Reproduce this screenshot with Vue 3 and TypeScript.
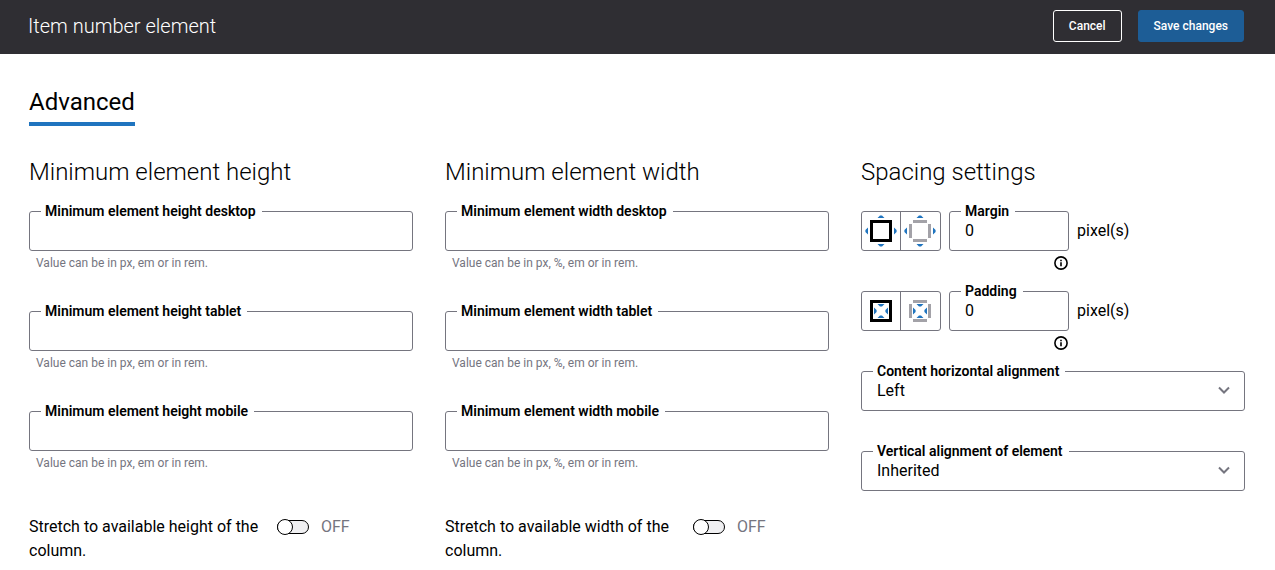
<script setup lang="ts">
import { reactive } from 'vue'

interface SizeColumn {
  key: 'height' | 'width'
  units: string
}

const columns: SizeColumn[] = [
  { key: 'height', units: 'px, em or in rem' },
  { key: 'width', units: 'px, %, em or in rem' },
]
const devices = ['desktop', 'tablet', 'mobile'] as const

const sizes = reactive<Record<string, string>>({})
const stretch = reactive<Record<string, boolean>>({ height: false, width: false })

const spacing = reactive([
  { key: 'margin', label: 'Margin', value: '0', all: true },
  { key: 'padding', label: 'Padding', value: '0', all: true },
])

const arrows: Record<string, string> = {
  margin: 'M12.5 3 15 .4h2L19.5 3zM12.5 29 15 31.6h2l2.5-2.6zM3 12.5.4 15v2L3 19.5zM29 12.5l2.6 2.5v2L29 19.5z',
  padding: 'M12.5 9h7L17 11.6h-2zM12.5 23h7L17 20.4h-2zM9 12.5v7l2.6-2.5v-2zM23 12.5v7L20.4 17v-2z',
}

const alignments = reactive([
  { key: 'horizontal', label: 'Content horizontal alignment', value: 'Left', options: ['Left', 'Center', 'Right'] },
  { key: 'vertical', label: 'Vertical alignment of element', value: 'Inherited', options: ['Inherited', 'Top', 'Center', 'Bottom'] },
])
</script>

<template>
  <div class="page">
    <header class="bar">
      <h1>Item number element</h1>
      <div class="actions">
        <button type="button" class="btn">Cancel</button>
        <button type="button" class="btn primary">Save changes</button>
      </div>
    </header>

    <main>
      <nav class="tabs"><button type="button" class="tab">Advanced</button></nav>

      <div class="columns">
        <section v-for="col in columns" :key="col.key">
          <h2>Minimum element {{ col.key }}</h2>
          <div v-for="device in devices" :key="device" class="size">
            <div class="field">
              <label :for="`${col.key}-${device}`">Minimum element {{ col.key }} {{ device }}</label>
              <input :id="`${col.key}-${device}`" v-model="sizes[`${col.key}-${device}`]" type="text" />
            </div>
            <p class="hint">Value can be in {{ col.units }}.</p>
          </div>
          <div class="stretch">
            <label :for="`stretch-${col.key}`">Stretch to available {{ col.key }} of the column.</label>
            <div class="switch">
              <input :id="`stretch-${col.key}`" v-model="stretch[col.key]" type="checkbox" role="switch" />
              <span>{{ stretch[col.key] ? 'ON' : 'OFF' }}</span>
            </div>
          </div>
        </section>

        <section>
          <h2>Spacing settings</h2>
          <div v-for="item in spacing" :key="item.key" class="spacing">
            <div class="modes">
              <button type="button" :aria-label="`${item.label} on all sides`" :aria-pressed="item.all" @click="item.all = true">
                <svg viewBox="0 0 32 32" aria-hidden="true">
                  <path d="M5 5h22v22H5zM8 8v16h16V8z" fill="#000" fill-rule="evenodd" />
                  <path :d="arrows[item.key]" fill="#1f74bf" />
                </svg>
              </button>
              <button type="button" :aria-label="`${item.label} per side`" :aria-pressed="!item.all" @click="item.all = false">
                <svg viewBox="0 0 32 32" aria-hidden="true">
                  <path d="M9 5h14v3H9zM9 24h14v3H9zM5 9h3v14H5zM24 9h3v14h-3z" fill="#a3a2a8" />
                  <path :d="arrows[item.key]" fill="#1f74bf" />
                </svg>
              </button>
            </div>
            <div class="amount">
              <div class="field">
                <label :for="item.key">{{ item.label }}</label>
                <input :id="item.key" v-model="item.value" type="text" />
              </div>
              <button type="button" class="info" :aria-label="`About ${item.label}`">
                <svg viewBox="0 0 16 16" aria-hidden="true">
                  <circle cx="8" cy="8" r="6.1" fill="none" stroke="#000" stroke-width="1.6" />
                  <path d="M7.2 7.2h1.6v4H7.2zM7.2 4.7h1.6v1.6H7.2z" fill="#000" />
                </svg>
              </button>
            </div>
            <span class="unit">pixel(s)</span>
          </div>

          <div v-for="item in alignments" :key="item.key" class="field align">
            <label :for="item.key">{{ item.label }}</label>
            <select :id="item.key" v-model="item.value">
              <option v-for="option in item.options" :key="option">{{ option }}</option>
            </select>
            <svg class="chevron" viewBox="0 0 16 16" aria-hidden="true">
              <path d="M3 5.5 8 10.5l5-5" fill="none" stroke="#75757f" stroke-width="2" />
            </svg>
          </div>
        </section>
      </div>
    </main>
  </div>
</template>

<style>
body {
  margin: 0;
  background: #fff;
}
</style>

<style scoped>
.page {
  font-family: Roboto, "Liberation Sans", sans-serif;
  font-size: 16px;
  line-height: 24px;
  color: #000;
}
.page * {
  box-sizing: border-box;
}
button,
input,
select {
  font: inherit;
  color: inherit;
}
button {
  cursor: pointer;
}
svg {
  display: block;
}
.bar {
  display: flex;
  align-items: center;
  justify-content: space-between;
  height: 54px;
  padding: 0 31px 2px 28px;
  background: #2f2e33;
  color: #fff;
}
h1 {
  margin: 0;
  font-size: 20px;
  font-weight: 300;
}
.actions {
  display: flex;
  gap: 16px;
}
.btn {
  height: 32px;
  padding: 0 15px;
  border: 1px solid #fff;
  border-radius: 3px;
  background: transparent;
  font-size: 12px;
  font-weight: 500;
  line-height: 16px;
}
.primary {
  background: #1d5d96;
  border-color: #1d5d96;
}
main {
  padding: 32px 30px 8px 29px;
}
.tab {
  padding: 0 0 4px;
  border: 0;
  border-bottom: 4px solid #1f74bf;
  background: none;
  font-size: 24px;
  line-height: 32px;
}
.tabs {
  display: flex;
}
.columns {
  display: grid;
  grid-template-columns: repeat(3, minmax(0, 1fr));
  gap: 32px;
  padding-top: 30px;
}
h2 {
  margin: 0 0 23px;
  font-size: 24px;
  font-weight: 300;
  line-height: 32px;
}
.size {
  height: 100px;
}
.field {
  position: relative;
  height: 40px;
}
.field label {
  position: absolute;
  top: -8px;
  left: 12px;
  padding: 0 6px 0 4px;
  background: #fff;
  font-size: 14px;
  font-weight: 600;
  line-height: 16px;
  white-space: nowrap;
}
.field input,
.field select {
  display: block;
  width: 100%;
  height: 40px;
  padding: 0 15px;
  border: 1px solid #75757f;
  border-radius: 3px;
  background: #fff;
  appearance: none;
}
.field input {
  padding-bottom: 2px;
}
.hint {
  margin: 4px 7px 0;
  color: #75757f;
  font-size: 12px;
  line-height: 16px;
}
.stretch {
  display: flex;
  gap: 8px;
  padding-top: 4px;
}
.stretch label {
  flex: 0 0 240px;
}
.switch {
  display: flex;
  align-items: center;
  gap: 12px;
  height: 24px;
  color: #75757f;
}
.switch input {
  display: flex;
  align-items: center;
  width: 32px;
  height: 14px;
  margin: 0;
  border: 1px solid #000;
  border-radius: 7px;
  background: #f0f0f2;
  appearance: none;
}
.switch input::before {
  content: "";
  flex: none;
  box-sizing: border-box;
  width: 16px;
  height: 16px;
  margin-left: -1px;
  border: 1px solid #000;
  border-radius: 50%;
  background: #fff;
}
.switch input:checked::before {
  margin-left: 15px;
}
.spacing {
  display: flex;
  gap: 8px;
  height: 80px;
}
.modes {
  display: flex;
  height: 40px;
  border: 1px solid #75757f;
  border-radius: 3px;
}
.modes button {
  padding: 3px;
  border: 0;
  background: none;
}
.modes button + button {
  padding-right: 4px;
  border-left: 1px solid #75757f;
}
.modes svg {
  width: 32px;
  height: 32px;
}
.amount {
  width: 120px;
}
.info {
  display: block;
  margin: 4px 0 0 auto;
  padding: 0;
  border: 0;
  background: none;
}
.info svg {
  width: 16px;
  height: 16px;
}
.unit {
  padding-top: 8px;
}
.align {
  margin-bottom: 40px;
}
.chevron {
  position: absolute;
  top: 11px;
  right: 13px;
  width: 16px;
  height: 16px;
  pointer-events: none;
}
</style>
